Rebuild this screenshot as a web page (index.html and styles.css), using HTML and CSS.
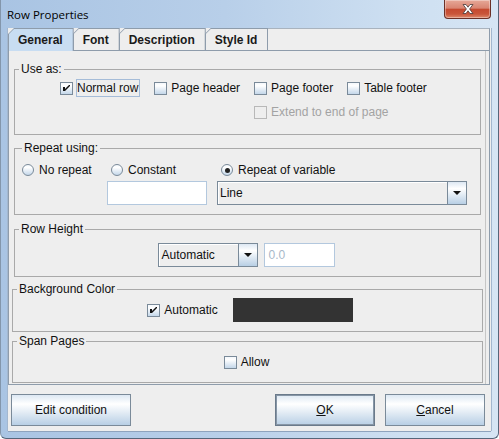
FILE: index.html
```html
<!DOCTYPE html>
<html lang="en">
  <head>
    <meta charset="UTF-8" />
    <title>Row Properties</title>
    <link rel="stylesheet" href="styles.css">
  </head>
  <body>
    <div class="window">
      <div class="titlebar">
        <span class="title">Row Properties</span>
        <div class="close-btn">
          <svg width="12" height="10" viewBox="0 0 12 10">
            <polygon points="1,0.5 4,0.5 6,3.2 8,0.5 11,0.5 7.6,5 11,9.5 8,9.5 6,6.8 4,9.5 1,9.5 4.4,5" fill="#fff" stroke="#4a3a38" stroke-width="0.8" />
          </svg>
        </div>
      </div>

      <div class="client">
        <div class="tabpane">
          <div class="tabs">
            <div class="tab active"><span>General</span></div>
            <div class="tab"><span>Font</span></div>
            <div class="tab"><span>Description</span></div>
            <div class="tab"><span>Style Id</span></div>
            <div class="tab-fill"></div>
          </div>

          <div class="tab-body">
            <fieldset class="group group-use">
              <legend>Use as:</legend>
              <div class="use-grid">
                <label class="check first">
                  <span class="box checked">
                    <svg width="11" height="11" viewBox="0 0 11 11"><polygon points="2,4 4,4 4,6 8,2 9,2 9,3 4,8 2,8" fill="#111" /></svg>
                  </span>
                  <span class="txt focused">Normal row</span>
                </label>
                <label class="check"><span class="box"></span><span class="txt">Page header</span></label>
                <label class="check"><span class="box"></span><span class="txt">Page footer</span></label>
                <label class="check"><span class="box"></span><span class="txt">Table footer</span></label>
                <label class="check disabled extend"><span class="box"></span><span class="txt">Extend to end of page</span></label>
              </div>
            </fieldset>

            <fieldset class="group group-repeat">
              <legend>Repeat using:</legend>
              <div class="repeat-grid">
                <label class="radio"><span class="dot"></span>No repeat</label>
                <label class="radio"><span class="dot"></span>Constant</label>
                <label class="radio"><span class="dot selected"></span>Repeat of variable</label>
                <div></div>
                <div class="field"></div>
                <div class="combo">
                  <span class="value">Line</span>
                  <span class="arrow"><svg width="8" height="4" viewBox="0 0 8 4"><polygon points="0,0 8,0 4,4" fill="#111" /></svg></span>
                </div>
              </div>
            </fieldset>

            <fieldset class="group group-height">
              <legend>Row Height</legend>
              <div class="row-center">
                <div class="combo combo-small">
                  <span class="value">Automatic</span>
                  <span class="arrow"><svg width="8" height="4" viewBox="0 0 8 4"><polygon points="0,0 8,0 4,4" fill="#111" /></svg></span>
                </div>
                <div class="field field-small disabled">0.0</div>
              </div>
            </fieldset>

            <fieldset class="group group-bg">
              <legend>Background Color</legend>
              <div class="row-center bg-row">
                <label class="check">
                  <span class="box checked">
                    <svg width="11" height="11" viewBox="0 0 11 11"><polygon points="2,4 4,4 4,6 8,2 9,2 9,3 4,8 2,8" fill="#111" /></svg>
                  </span>
                  <span class="txt">Automatic</span>
                </label>
                <div class="swatch" style="background: #333333"></div>
              </div>
            </fieldset>

            <fieldset class="group group-span">
              <legend>Span Pages</legend>
              <div class="row-center">
                <label class="check"><span class="box"></span><span class="txt">Allow</span></label>
              </div>
            </fieldset>
          </div>
        </div>

        <div class="buttons">
          <button class="btn btn-wide">Edit condition</button>
          <div class="spacer"></div>
          <button class="btn default"><u>O</u>K</button>
          <button class="btn"><u>C</u>ancel</button>
        </div>
      </div>
    </div>
  </body>
</html>
```

FILE: styles.css
```css
* {
  box-sizing: border-box;
}
html,
body {
  margin: 0;
  padding: 0;
}
body {
  width: 499px;
  height: 439px;
  overflow: hidden;
  font-family: "Liberation Sans", Arial, sans-serif;
  font-size: 12px;
  color: #111;
  background: #fff;
}

/* window frame */
.window {
  width: 499px;
  height: 439px;
  display: flex;
  flex-direction: column;
  padding: 0 7px 7px 7px;
  background: linear-gradient(to right, #a9c4e3 0%, #b8cfe9 45%, #cddff1 80%, #d6e5f4 100%);
  border-left: 1px solid #8396ab;
  border-right: 1px solid #56667a;
  border-bottom: 1px solid #56667a;
  border-radius: 0 0 6px 6px;
}
.titlebar {
  height: 28px;
  flex-shrink: 0;
  display: flex;
  justify-content: space-between;
}
.title {
  align-self: center;
  margin-left: -1px;
  margin-top: 1px;
  font-family: "Open Sans", sans-serif;
  font-size: 11.5px;
  color: #000;
}
.close-btn {
  width: 47px;
  height: 19px;
  display: flex;
  align-items: center;
  justify-content: center;
  border: 1px solid #6b3027;
  border-top: none;
  border-radius: 0 0 4px 4px;
  background: linear-gradient(to bottom, #e6a898 0%, #d98572 45%, #c54a30 52%, #c9553a 78%, #de8a6c 100%);
  box-shadow: inset 0 0 0 1px rgba(255, 255, 255, 0.35);
}

.client {
  flex: 1;
  display: flex;
  flex-direction: column;
  background: #eeeeee;
  box-shadow: -1px 0 0 #a3b7cf, 1px 0 0 #a3b7cf, 0 1px 0 #8ea3bd;
}

/* tabbed pane */
.tabpane {
  height: 357px;
  margin-right: 1px;
  display: flex;
  flex-direction: column;
}
.tabs {
  display: flex;
  height: 23px;
  flex-shrink: 0;
}
.tab {
  height: 23px;
  padding: 1px 1px 1px 1px;
  margin-right: -1px;
  background: #8e9cab;
  clip-path: polygon(0 6px, 6px 0, 100% 0, 100% 100%, 0 100%);
}
.tab span {
  display: flex;
  align-items: center;
  height: 100%;
  padding: 1px 10px 0 9px;
  background: #eeeeee;
  font-weight: bold;
  color: #1a1a1a;
  clip-path: polygon(0 5px, 5px 0, 100% 0, 100% 100%, 0 100%);
}
.tab.active {
  padding-bottom: 0;
}
.tab.active span {
  background: #c8ddf2;
  padding-bottom: 1px;
}
.tab-fill {
  flex: 1;
  border-top: 1px solid #a9b3be;
  border-right: 1px solid #8e9cab;
  border-bottom: 1px solid #8e9cab;
}
.tab-body {
  flex: 1;
  display: flex;
  flex-direction: column;
  border: 1px solid #8e9cab;
  border-top: none;
  box-shadow: inset -3px 0 0 #eeeeee, inset -4px 0 0 #c6c6c6;
}

/* titled groups */
.group {
  margin: 0 8px 0 5px;
  padding: 0;
  min-width: 0;
  border: 1px solid #a9a9a9;
}
.group legend {
  margin-left: 4px;
  padding: 0 2px;
  line-height: 14px;
  color: #111;
}
.group-use {
  margin-top: 11px;
  padding: 0 0 10px;
}
.group-repeat {
  margin-top: 6px;
  padding: 5px 0 9px 3px;
}
.group-height {
  margin-top: 7px;
  padding: 7px 3px 9px 0;
}
.group-bg {
  margin: 5px 6px 0 3px;
  padding: 2px 0 9px;
}
.group-span {
  margin: 2px 6px 0 3px;
  padding: 5px 0 11px;
}

.use-grid {
  display: grid;
  grid-template-columns: repeat(4, auto);
  grid-auto-rows: 24px;
  column-gap: 12px;
  justify-content: start;
  align-items: center;
  padding-left: 45px;
}
.use-grid .first {
  margin-right: 2px;
}
.use-grid .extend {
  grid-column: 3 / span 2;
}

.repeat-grid {
  display: grid;
  grid-template-columns: 79px 100px 250px;
  grid-template-rows: 20px 24px;
  column-gap: 10px;
  row-gap: 1px;
  align-items: center;
}

.row-center {
  display: flex;
  justify-content: center;
  align-items: center;
  gap: 6px;
}
.bg-row {
  gap: 13px;
  padding-left: 5px;
}

/* check boxes and radios */
.check {
  display: inline-flex;
  align-items: center;
  gap: 3px;
  white-space: nowrap;
}
.check .txt {
  line-height: 14px;
  padding: 1px 1px 1px 0;
  border: 1px solid transparent;
}
.check .txt.focused {
  border-color: #a5bcd8;
}
.box {
  width: 13px;
  height: 13px;
  flex-shrink: 0;
  display: block;
  border: 1px solid #7a8a99;
  background: linear-gradient(to bottom, #f4f8fb 0%, #ffffff 25%, #c4d7ea 100%);
}
.box svg {
  display: block;
}
.check.disabled .box {
  border-color: #b8b8b8;
  background: #eeeeee;
}
.check.disabled .txt {
  color: #a3a3a3;
}

.radio {
  display: inline-flex;
  align-items: center;
  gap: 5px;
  margin-left: 4px;
  white-space: nowrap;
}
.dot {
  width: 12px;
  height: 12px;
  flex-shrink: 0;
  display: flex;
  align-items: center;
  justify-content: center;
  border: 1px solid #7a8a99;
  border-radius: 50%;
  background: linear-gradient(to bottom, #f4f8fb 0%, #ffffff 25%, #c4d7ea 100%);
}
.dot.selected::after {
  content: "";
  width: 5px;
  height: 5px;
  border-radius: 50%;
  background: #222;
}

/* inputs */
.field {
  height: 24px;
  background: #fff;
  border: 1px solid #b3c8de;
}
.field-small {
  width: 71px;
  line-height: 22px;
  padding-left: 4px;
}
.field.disabled {
  color: #a8b8c9;
}
.combo {
  height: 24px;
  display: flex;
  border: 1px solid #7a8a99;
  background: #eeeeee;
}
.combo .value {
  flex: 1;
  display: flex;
  align-items: center;
  padding-left: 2px;
  box-shadow: inset 1px 1px 0 #ffffff;
}
.combo .arrow {
  width: 19px;
  display: flex;
  align-items: center;
  justify-content: center;
  border-left: 1px solid #7a8a99;
  background: linear-gradient(to bottom, #dde8f3 0%, #ffffff 30%, #b8cfe5 100%);
}
.combo .arrow svg {
  display: block;
}
.combo-small {
  width: 100px;
}
.combo-small .value {
  padding-left: 3px;
}
.swatch {
  width: 120px;
  height: 24px;
}

/* bottom buttons */
.buttons {
  display: flex;
  gap: 10px;
  margin-top: 9px;
  padding: 0 6px 0 3px;
}
.spacer {
  flex: 1;
}
.btn {
  width: 100px;
  height: 32px;
  font-family: "Liberation Sans", Arial, sans-serif;
  font-size: 12px;
  color: #111;
  border: 1px solid #7a8a99;
  background: linear-gradient(to bottom, #dde8f3 0%, #ffffff 30%, #b8cfe5 100%);
  padding: 0;
}
.btn-wide {
  width: 120px;
}
.btn.default {
  border-color: #6a7a8b;
  box-shadow: inset 0 0 0 1px #8796a6;
}
```
